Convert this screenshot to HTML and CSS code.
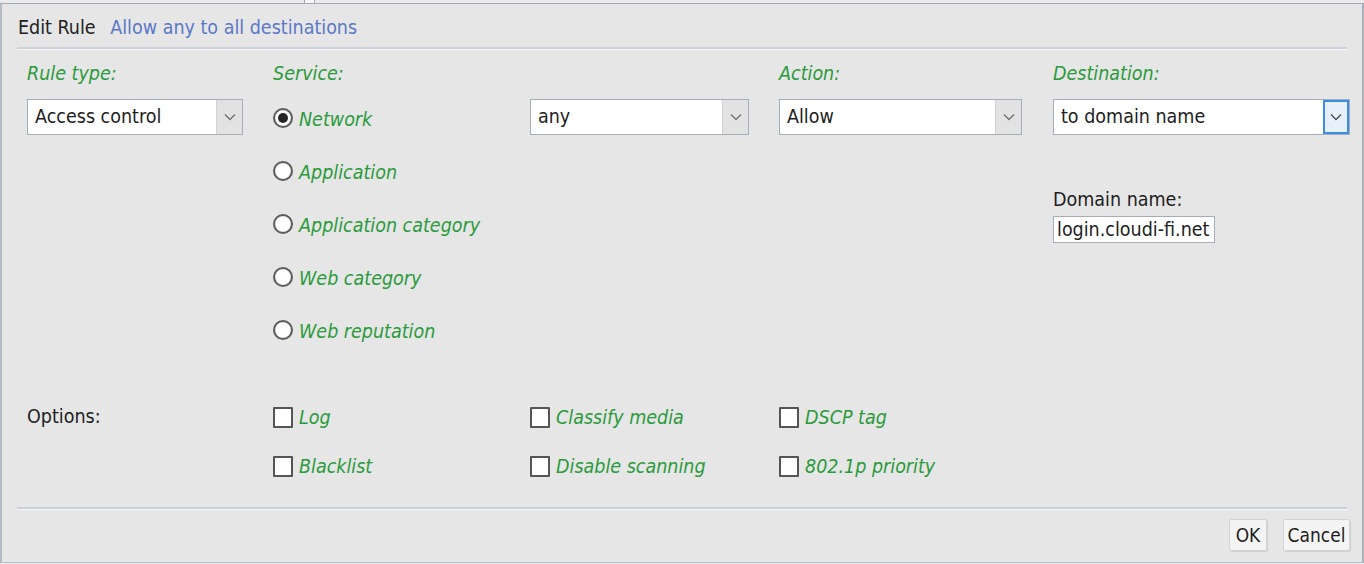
FILE: index.html
```html
<!DOCTYPE html>
<html lang="en">
<head>
    <meta charset="UTF-8">
    <meta name="viewport" content="width=device-width, initial-scale=1.0">
    <title>Edit Rule</title>
    <link rel="stylesheet" href="styles.css">
</head>
<body>

<div class="top-strip">
    <span class="top-tick"></span>
</div>

<div class="panel">
    <div class="panel-header">
        <span class="panel-title">Edit Rule</span>
        <span class="panel-subtitle">Allow any to all destinations</span>
    </div>

    <div class="rule-grid">
        <div class="col">
            <div class="field-label">Rule type:</div>
            <div class="select select-type">
                <span class="select-text">Access control</span>
                <span class="select-btn"><svg width="12" height="8" viewBox="0 0 12 8"><path d="M1 1.5 L6 6.5 L11 1.5" fill="none" stroke="#6f6f6f" stroke-width="1.3"/></svg></span>
            </div>
        </div>

        <div class="col">
            <div class="field-label">Service:</div>
            <div class="radio-list">
                <label class="radio-row"><span class="radio checked"></span><span class="opt-text">Network</span></label>
                <label class="radio-row"><span class="radio"></span><span class="opt-text">Application</span></label>
                <label class="radio-row"><span class="radio"></span><span class="opt-text">Application category</span></label>
                <label class="radio-row"><span class="radio"></span><span class="opt-text">Web category</span></label>
                <label class="radio-row"><span class="radio"></span><span class="opt-text">Web reputation</span></label>
            </div>
        </div>

        <div class="col">
            <div class="field-label">&nbsp;</div>
            <div class="select select-any">
                <span class="select-text">any</span>
                <span class="select-btn"><svg width="12" height="8" viewBox="0 0 12 8"><path d="M1 1.5 L6 6.5 L11 1.5" fill="none" stroke="#6f6f6f" stroke-width="1.3"/></svg></span>
            </div>
        </div>

        <div class="col">
            <div class="field-label">Action:</div>
            <div class="select select-action">
                <span class="select-text">Allow</span>
                <span class="select-btn"><svg width="12" height="8" viewBox="0 0 12 8"><path d="M1 1.5 L6 6.5 L11 1.5" fill="none" stroke="#6f6f6f" stroke-width="1.3"/></svg></span>
            </div>
        </div>

        <div class="col">
            <div class="field-label">Destination:</div>
            <div class="select select-dest focused">
                <span class="select-text">to domain name</span>
                <span class="select-btn"><svg width="12" height="8" viewBox="0 0 12 8"><path d="M1 1.5 L6 6.5 L11 1.5" fill="none" stroke="#4a4a4a" stroke-width="1.3"/></svg></span>
            </div>
            <div class="plain-label">Domain name:</div>
            <div class="text-input">login.cloudi-fi.net</div>
        </div>
    </div>

    <div class="options-grid">
        <div class="options-label">Options:</div>
        <div class="check-col">
            <label class="check-row"><span class="checkbox"></span><span class="opt-text">Log</span></label>
            <label class="check-row"><span class="checkbox"></span><span class="opt-text">Blacklist</span></label>
        </div>
        <div class="check-col">
            <label class="check-row"><span class="checkbox"></span><span class="opt-text">Classify media</span></label>
            <label class="check-row"><span class="checkbox"></span><span class="opt-text">Disable scanning</span></label>
        </div>
        <div class="check-col">
            <label class="check-row"><span class="checkbox"></span><span class="opt-text">DSCP tag</span></label>
            <label class="check-row"><span class="checkbox"></span><span class="opt-text">802.1p priority</span></label>
        </div>
    </div>

    <div class="panel-footer">
        <button class="btn btn-ok">OK</button>
        <button class="btn btn-cancel">Cancel</button>
    </div>
</div>

</body>
</html>
```

FILE: styles.css
```css
body {
    margin: 0;
    padding: 0;
    width: 1364px;
    height: 564px;
    overflow: hidden;
    font-family: "DejaVu Sans Condensed", "DejaVu Sans", sans-serif;
    font-size: 19.5px;
    color: #1e1e1e;
    background-color: #e6e6e6;
}

.top-strip {
    height: 3px;
    background-color: #ececec;
    position: relative;
}

.top-tick {
    position: absolute;
    left: 304px;
    top: 0;
    width: 9px;
    height: 3px;
    border-left: 1px solid #a4abb4;
    border-right: 1px solid #a4abb4;
    background-color: #f8f8f8;
}

.panel {
    height: 558px;
    border-top: 1px solid #a3abb5;
    border-left: 2px solid #b3bac5;
    border-right: 2px solid #aab1bb;
    border-bottom: 1px solid #b9bfc8;
    background-color: #e6e6e6;
}

.panel-header {
    margin: 0 15px 0 15px;
    padding: 12px 0 0 1px;
    height: 31px;
    border-bottom: 2px solid #c9d1db;
    box-shadow: 0 1px 0 #f7f7f7;
    line-height: 24px;
}

.panel-title {
    color: #222;
    margin-right: 9px;
}

.panel-subtitle {
    color: #5b78c6;
}

.rule-grid {
    display: grid;
    grid-template-columns: 246px 257px 249px 274px 297px;
    padding: 13px 0 0 25px;
    height: 320px;
}

.field-label {
    height: 24px;
    line-height: 24px;
    margin-bottom: 13px;
    color: #2a9b3b;
    font-style: italic;
}

.select {
    display: flex;
    height: 34px;
    border: 1px solid #a4aeba;
    background-color: #fff;
}

.select-type {
    width: 214px;
}

.select-any {
    width: 217px;
}

.select-action {
    width: 241px;
}

.select-dest {
    width: 295px;
}

.select-text {
    flex: 1;
    padding-left: 7px;
    line-height: 34px;
}

.select-btn {
    display: flex;
    align-items: center;
    justify-content: center;
    width: 25px;
    background-color: #e2e2e2;
    border-left: 1px solid #d2d2d2;
}

.focused .select-btn {
    width: 22px;
    background-color: #e6f0fa;
    border: 2px solid #3b8ee3;
}

.radio-list {
    display: flex;
    flex-direction: column;
    margin-top: -6px;
}

.radio-row {
    display: flex;
    align-items: center;
    height: 53px;
}

.radio {
    width: 16px;
    height: 16px;
    border: 2px solid #5c5c5c;
    border-radius: 50%;
    background-color: #fff;
    margin-right: 6px;
    margin-top: -4px;
    position: relative;
    box-shadow: inset 0 0 1px #999;
}

.radio.checked::after {
    content: "";
    position: absolute;
    left: 3px;
    top: 3px;
    width: 10px;
    height: 10px;
    border-radius: 50%;
    background-color: #262626;
}

.opt-text {
    color: #2a9b3b;
    font-style: italic;
}

.plain-label {
    margin-top: 53px;
    height: 24px;
    line-height: 24px;
}

.text-input {
    width: 157px;
    height: 25px;
    line-height: 25px;
    margin-top: 4px;
    padding-left: 3px;
    border: 1px solid #a4aeba;
    background-color: #fff;
    white-space: nowrap;
    overflow: hidden;
}

.options-grid {
    display: grid;
    grid-template-columns: 246px 257px 249px 274px;
    padding: 23px 0 0 25px;
    height: 102px;
}

.options-label {
    line-height: 24px;
}

.check-col {
    display: flex;
    flex-direction: column;
    gap: 25px;
}

.check-row {
    display: flex;
    align-items: center;
    height: 24px;
}

.checkbox {
    width: 16px;
    height: 17px;
    border: 2px solid #555;
    border-radius: 1px;
    background-color: #fff;
    margin-right: 6px;
}

.panel-footer {
    display: flex;
    justify-content: flex-end;
    gap: 16px;
    margin: 0 15px;
    padding-top: 10px;
    border-top: 2px solid #c9d1db;
    box-shadow: inset 0 1px 0 #f7f7f7;
}

.btn {
    height: 32px;
    padding: 0;
    border: 1px solid #d4d4d4;
    border-radius: 2px;
    background-color: #f4f4f4;
    box-shadow: 1px 1px 1px #cfcfcf;
    font-family: inherit;
    font-size: 19px;
    color: #1e1e1e;
    cursor: pointer;
}

.btn-ok {
    width: 38px;
}

.btn-cancel {
    width: 67px;
    margin-right: -3px;
}
```
